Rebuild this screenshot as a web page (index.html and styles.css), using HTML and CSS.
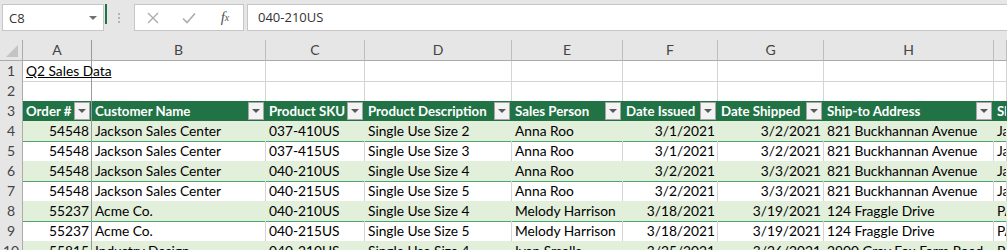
FILE: index.html
```html
<!DOCTYPE html>
<html lang="en">

<head>
    <meta http-equiv="Content-Type" content="text/html;charset=UTF-8">
    <title>Q2 Sales Data</title>
    <link rel="stylesheet" href="styles.css">
</head>

<body>
    <div class="formula-bar">
        <div class="name-box">
            <span>C8</span>
            <span class="caret"></span>
        </div>
        <span class="active-mark"></span>
        <span class="grip"><i></i><i></i><i></i></span>
        <div class="fx-buttons">
            <span class="fx-button">
                <svg width="12" height="12" viewBox="0 0 12 12"><path d="M1 1L11 11M11 1L1 11" stroke="#acacac" stroke-width="1.4" fill="none"/></svg>
            </span>
            <span class="fx-button">
                <svg width="14" height="12" viewBox="0 0 14 12"><path d="M1 6.5L5 10.5L13 1.5" stroke="#acacac" stroke-width="1.6" fill="none"/></svg>
            </span>
            <span class="fx-button fx-label">f<sub>x</sub></span>
        </div>
        <div class="formula-input">040-210US</div>
    </div>

    <div class="sheet">
        <div class="row col-heads">
            <div class="corner"><span class="corner-mark"></span></div>
            <div class="col-head frozen">A</div>
            <div class="col-head">B</div>
            <div class="col-head">C</div>
            <div class="col-head">D</div>
            <div class="col-head">E</div>
            <div class="col-head">F</div>
            <div class="col-head">G</div>
            <div class="col-head">H</div>
            <div class="col-head"></div>
        </div>

        <div class="row">
            <div class="row-head">1</div>
            <div class="cell frozen title"><span class="underline">Q2 Sales Data</span></div>
            <div class="cell"></div>
            <div class="cell"></div>
            <div class="cell"></div>
            <div class="cell"></div>
            <div class="cell"></div>
            <div class="cell"></div>
            <div class="cell"></div>
            <div class="cell"></div>
        </div>

        <div class="row">
            <div class="row-head">2</div>
            <div class="cell frozen"></div>
            <div class="cell"></div>
            <div class="cell"></div>
            <div class="cell"></div>
            <div class="cell"></div>
            <div class="cell"></div>
            <div class="cell"></div>
            <div class="cell"></div>
            <div class="cell"></div>
        </div>

        <div class="row table-head">
            <div class="row-head">3</div>
            <div class="cell frozen"><span class="head-text">Order #</span><span class="filter"></span></div>
            <div class="cell"><span class="head-text">Customer Name</span><span class="filter"></span></div>
            <div class="cell"><span class="head-text">Product SKU</span><span class="filter"></span></div>
            <div class="cell"><span class="head-text">Product Description</span><span class="filter"></span></div>
            <div class="cell"><span class="head-text">Sales Person</span><span class="filter"></span></div>
            <div class="cell"><span class="head-text">Date Issued</span><span class="filter"></span></div>
            <div class="cell"><span class="head-text">Date Shipped</span><span class="filter"></span></div>
            <div class="cell"><span class="head-text">Ship-to Address</span><span class="filter"></span></div>
            <div class="cell"><span class="head-text">Ship-to City</span><span class="filter"></span></div>
        </div>

        <div class="row table-row band">
            <div class="row-head">4</div>
            <div class="cell frozen num">54548</div>
            <div class="cell">Jackson Sales Center</div>
            <div class="cell">037-410US</div>
            <div class="cell">Single Use Size 2</div>
            <div class="cell">Anna Roo</div>
            <div class="cell num">3/1/2021</div>
            <div class="cell num">3/2/2021</div>
            <div class="cell">821 Buckhannan Avenue</div>
            <div class="cell">Jackson</div>
        </div>

        <div class="row table-row">
            <div class="row-head">5</div>
            <div class="cell frozen num">54548</div>
            <div class="cell">Jackson Sales Center</div>
            <div class="cell">037-415US</div>
            <div class="cell">Single Use Size 3</div>
            <div class="cell">Anna Roo</div>
            <div class="cell num">3/1/2021</div>
            <div class="cell num">3/2/2021</div>
            <div class="cell">821 Buckhannan Avenue</div>
            <div class="cell">Jackson</div>
        </div>

        <div class="row table-row band">
            <div class="row-head">6</div>
            <div class="cell frozen num">54548</div>
            <div class="cell">Jackson Sales Center</div>
            <div class="cell">040-210US</div>
            <div class="cell">Single Use Size 4</div>
            <div class="cell">Anna Roo</div>
            <div class="cell num">3/2/2021</div>
            <div class="cell num">3/3/2021</div>
            <div class="cell">821 Buckhannan Avenue</div>
            <div class="cell">Jackson</div>
        </div>

        <div class="row table-row">
            <div class="row-head">7</div>
            <div class="cell frozen num">54548</div>
            <div class="cell">Jackson Sales Center</div>
            <div class="cell">040-215US</div>
            <div class="cell">Single Use Size 5</div>
            <div class="cell">Anna Roo</div>
            <div class="cell num">3/2/2021</div>
            <div class="cell num">3/3/2021</div>
            <div class="cell">821 Buckhannan Avenue</div>
            <div class="cell">Jackson</div>
        </div>

        <div class="row table-row band">
            <div class="row-head">8</div>
            <div class="cell frozen num">55237</div>
            <div class="cell">Acme Co.</div>
            <div class="cell">040-210US</div>
            <div class="cell">Single Use Size 4</div>
            <div class="cell">Melody Harrison</div>
            <div class="cell num">3/18/2021</div>
            <div class="cell num">3/19/2021</div>
            <div class="cell">124 Fraggle Drive</div>
            <div class="cell">PA</div>
        </div>

        <div class="row table-row">
            <div class="row-head">9</div>
            <div class="cell frozen num">55237</div>
            <div class="cell">Acme Co.</div>
            <div class="cell">040-215US</div>
            <div class="cell">Single Use Size 5</div>
            <div class="cell">Melody Harrison</div>
            <div class="cell num">3/18/2021</div>
            <div class="cell num">3/19/2021</div>
            <div class="cell">124 Fraggle Drive</div>
            <div class="cell">PA</div>
        </div>

        <div class="row table-row band">
            <div class="row-head">10</div>
            <div class="cell frozen num">55815</div>
            <div class="cell">Industry Design</div>
            <div class="cell">040-210US</div>
            <div class="cell">Single Use Size 4</div>
            <div class="cell">Ivan Smalls</div>
            <div class="cell num">3/25/2021</div>
            <div class="cell num">3/26/2021</div>
            <div class="cell">2900 Gray Fox Farm Road</div>
            <div class="cell">PA</div>
        </div>
    </div>
</body>

</html>
```

FILE: styles.css
```css
body {
    margin: 0;
    width: 1007px;
    height: 250px;
    overflow: hidden;
    background-color: #e6e6e6;
    color: #000000;
    font-family: Lato, "Liberation Sans", sans-serif;
}

/* formula bar */

.formula-bar {
    display: flex;
    align-items: flex-start;
    height: 40px;
    padding: 4px 0 0 2px;
    box-sizing: border-box;
    font-family: "Open Sans", "Noto Sans", sans-serif;
    font-size: 13px;
    color: #333333;
}

.name-box {
    display: flex;
    align-items: center;
    justify-content: space-between;
    width: 102px;
    height: 27px;
    padding: 0 6px 0 6px;
    box-sizing: border-box;
    background-color: #ffffff;
    border: 1px solid #c6c6c6;
}

.caret {
    border-left: 4px solid transparent;
    border-right: 4px solid transparent;
    border-top: 4px solid #707070;
}

.active-mark {
    width: 2px;
    height: 20px;
    margin-left: 1px;
    background-color: #217346;
}

.grip {
    display: flex;
    flex-direction: column;
    gap: 2px;
    margin: 9px 0 0 11px;
}

.grip i {
    width: 2px;
    height: 2px;
    background-color: #b4b4b4;
}

.fx-buttons {
    display: flex;
    width: 110px;
    height: 27px;
    margin-left: 14px;
    box-sizing: border-box;
    background-color: #ffffff;
    border: 1px solid #c6c6c6;
}

.fx-button {
    display: flex;
    align-items: center;
    justify-content: center;
    width: 36px;
}

.fx-label {
    font-family: "Liberation Serif", serif;
    font-style: italic;
    font-size: 15px;
    color: #555555;
}

.fx-label sub {
    font-size: 10px;
    vertical-align: -1px;
}

.formula-input {
    flex: 1;
    height: 27px;
    margin-left: 3px;
    padding-left: 10px;
    box-sizing: border-box;
    line-height: 25px;
    background-color: #ffffff;
    border: 1px solid #c6c6c6;
    border-right: none;
}

/* sheet grid */

.row {
    display: grid;
    grid-template-columns: 23px 69px 174px 99px 147px 111px 95px 106px 170px 1fr;
    height: 20px;
    background-color: #ffffff;
}

.col-heads {
    height: 21px;
    background-color: #e6e6e6;
}

.corner {
    display: flex;
    align-items: flex-end;
    justify-content: flex-end;
    padding: 0 4px 3px 0;
    border-right: 1px solid #ababab;
    border-bottom: 1px solid #ababab;
}

.corner-mark {
    width: 0;
    height: 0;
    border-left: 12px solid transparent;
    border-bottom: 12px solid #c4c4c4;
}

.col-head {
    text-align: center;
    font-size: 14px;
    line-height: 20px;
    color: #444444;
    border-right: 1px solid #bdbdbd;
    border-bottom: 1px solid #ababab;
}

.row-head {
    text-align: center;
    font-size: 14px;
    line-height: 20px;
    color: #444444;
    background-color: #e6e6e6;
    border-right: 1px solid #ababab;
    border-bottom: 1px solid #d8d8d8;
    box-sizing: border-box;
}

.cell {
    box-sizing: border-box;
    padding: 0 2px 0 3px;
    font-size: 13.75px;
    line-height: 20px;
    white-space: nowrap;
    overflow: hidden;
    border-right: 1px solid #d4d4d4;
    border-bottom: 1px solid #d4d4d4;
}

.col-heads .frozen,
.cell.frozen {
    border-right-color: #9a9a9a;
}

.title {
    overflow: visible;
}

.underline {
    text-decoration: underline;
}

.num {
    text-align: right;
}

/* table */

.table-head .cell {
    display: flex;
    align-items: center;
    padding-right: 1px;
    background-color: #217346;
    border-right-color: #217346;
    border-bottom-color: #217346;
    color: #ffffff;
    font-size: 13.25px;
    font-weight: bold;
}

.table-head .cell.frozen {
    border-right-color: #9a9a9a;
}

.head-text {
    flex-shrink: 0;
}

.filter {
    display: flex;
    flex-shrink: 0;
    align-items: center;
    justify-content: center;
    width: 16px;
    height: 18px;
    margin-left: auto;
    box-sizing: border-box;
    background-color: #f3f3f3;
    border: 1px solid #a6a6a6;
}

.filter::after {
    content: "";
    border-left: 4px solid transparent;
    border-right: 4px solid transparent;
    border-top: 4px solid #595959;
}

.table-row .cell {
    border-bottom-color: #4ea36b;
}

.band .cell {
    background-color: #e2efda;
    border-right-color: #e2efda;
}

.band .cell.frozen {
    border-right-color: #9a9a9a;
}
```
